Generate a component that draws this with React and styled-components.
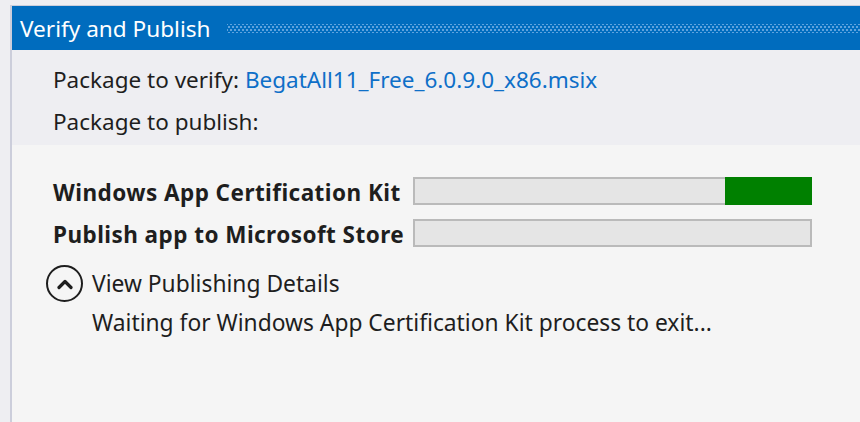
import styled, { createGlobalStyle } from "styled-components";

const GlobalStyle = createGlobalStyle`
  body {
    margin: 0;
    background: #eeeef2;
    font-family: "Noto Sans", "Open Sans", sans-serif;
    color: #1e1e1e;
  }
`;

const Frame = styled.div`
  padding: 5px 0 0 10px;
  height: 422px;
  box-sizing: border-box;
  overflow: hidden;
`;

const Panel = styled.div`
  border-left: 2px solid #cccedb;
  border-top: 1px solid #cccedb;
  background: #f5f5f5;
  height: 100%;
`;

const Header = styled.div`
  height: 44px;
  background: #006cbe;
  display: flex;
  align-items: center;
  padding-left: 8px;
`;

const Title = styled.span`
  color: #fff;
  font-size: 22.6px;
  white-space: nowrap;
`;

const Grip = styled.div`
  flex: 1;
  height: 9px;
  margin: 1px 0 0 16px;
  background-image: radial-gradient(#5fa3de 0.9px, transparent 1.1px),
    radial-gradient(#5fa3de 0.9px, transparent 1.1px);
  background-size: 4px 6px;
  background-position: 0 0, 2px 3px;
`;

const Info = styled.div`
  background: #eeeef2;
  padding: 8px 0 3px 41px;
`;

const InfoRow = styled.div`
  height: 42px;
  display: flex;
  align-items: center;
  font-size: 22.5px;
  white-space: pre;
`;

const Link = styled.span`
  color: #0e6fc8;
`;

const Body = styled.div`
  padding: 32px 0 0 41px;
`;

const Steps = styled.div`
  display: grid;
  grid-template-columns: 348px 399px;
  column-gap: 12px;
  row-gap: 14px;
  align-items: center;
`;

const StepLabel = styled.span`
  font-size: 22.5px;
  line-height: 28px;
  padding-top: 2px;
  margin-bottom: -2px;
  font-weight: 700;
  letter-spacing: 0.45px;
  white-space: nowrap;
`;

const Bar = styled.div`
  height: 28px;
  box-sizing: border-box;
  border: 2px solid #bababa;
  background: #e5e5e5;
  position: relative;
`;

const Fill = styled.div`
  position: absolute;
  top: -2px;
  right: -2px;
  bottom: -2px;
  background: #008000;
`;

const Details = styled.div`
  margin: 18px 0 0 -7px;
  display: grid;
  grid-template-columns: 37px auto;
  column-gap: 9px;
  row-gap: 2px;
  align-items: center;
  font-size: 22.8px;
  line-height: 30px;
`;

const Toggle = styled.button`
  width: 37px;
  height: 37px;
  border-radius: 50%;
  border: 2px solid #1e1e1e;
  background: transparent;
  padding: 0;
  display: flex;
  align-items: center;
  justify-content: center;
  cursor: pointer;
`;

const Status = styled.span`
  grid-column: 2;
  line-height: 38px;
  white-space: nowrap;
`;

const steps = [
  { label: "Windows App Certification Kit", progress: 22 },
  { label: "Publish app to Microsoft Store", progress: 0 },
];

const App = () => {
  return (
    <>
      <GlobalStyle />
      <Frame>
        <Panel>
          <Header>
            <Title>Verify and Publish</Title>
            <Grip />
          </Header>
          <Info>
            <InfoRow>
              Package to verify: <Link>BegatAll11_Free_6.0.9.0_x86.msix</Link>
            </InfoRow>
            <InfoRow>Package to publish:</InfoRow>
          </Info>
          <Body>
            <Steps>
              {steps.map((s) => [
                <StepLabel key={s.label}>{s.label}</StepLabel>,
                <Bar key={s.label + "-bar"}>
                  {s.progress > 0 && <Fill style={{ width: `${s.progress}%` }} />}
                </Bar>,
              ])}
            </Steps>
            <Details>
              <Toggle aria-label="Collapse">
                <svg width="16" height="12" viewBox="0 0 16 12">
                  <path
                    d="M2 9.5 L8 3.5 L14 9.5"
                    fill="none"
                    stroke="#1e1e1e"
                    strokeWidth="3.2"
                    strokeLinecap="round"
                    strokeLinejoin="round"
                  />
                </svg>
              </Toggle>
              <span>View Publishing Details</span>
              <Status>Waiting for Windows App Certification Kit process to exit...</Status>
            </Details>
          </Body>
        </Panel>
      </Frame>
    </>
  );
};

export default App;
